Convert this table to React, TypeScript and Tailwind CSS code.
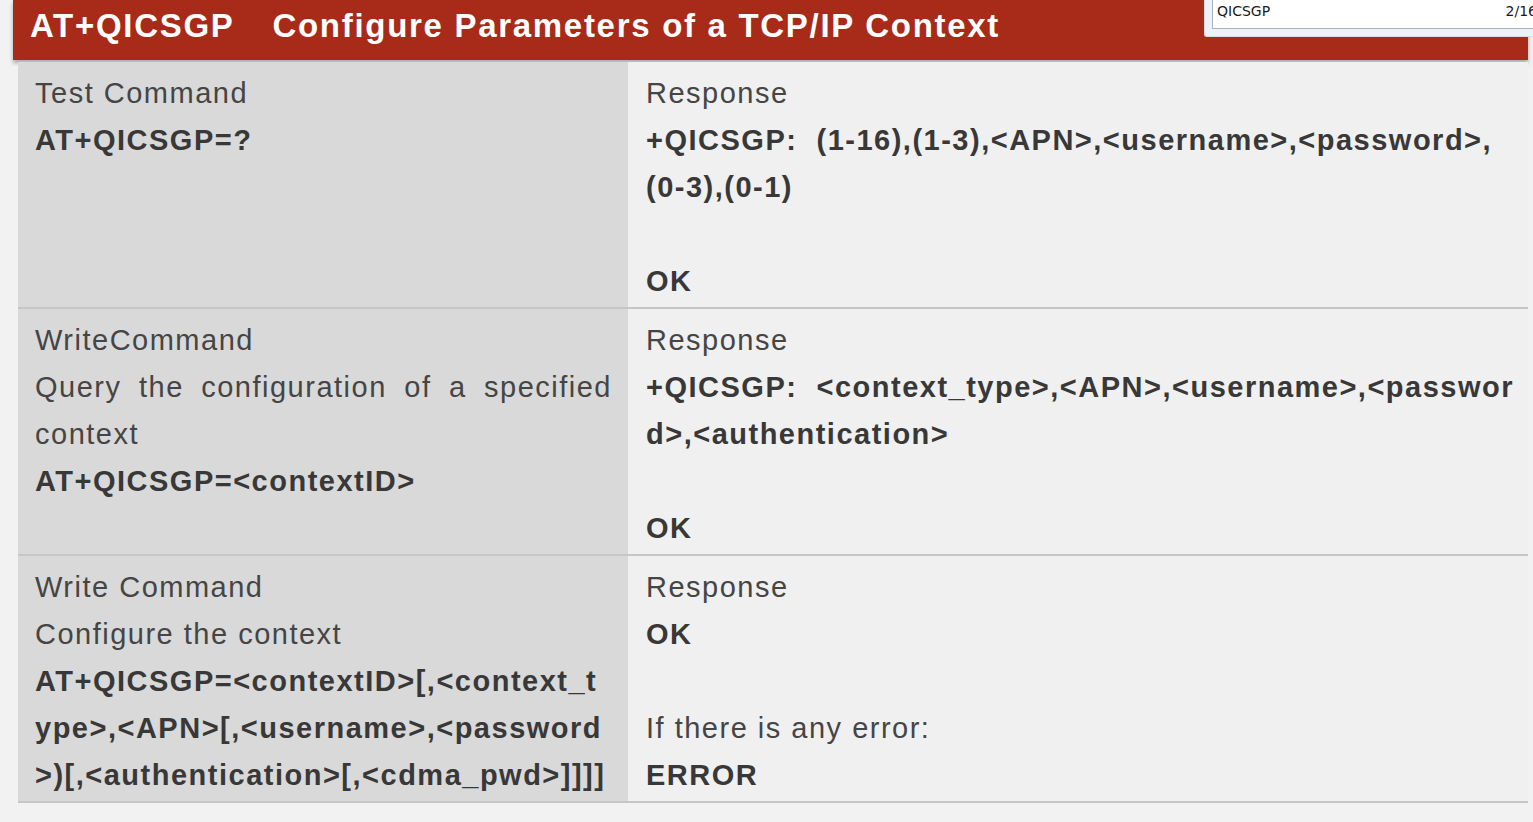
import React from 'react'

type Line = { text: string; bold?: boolean; justify?: boolean }

interface Row {
  left: Line[]
  right: Line[]
}

const rows: Row[] = [
  {
    left: [{ text: 'Test Command' }, { text: 'AT+QICSGP=?', bold: true }],
    right: [
      { text: 'Response' },
      { text: '+QICSGP:  (1-16),(1-3),<APN>,<username>,<password>,', bold: true },
      { text: '(0-3),(0-1)', bold: true },
      { text: '' },
      { text: 'OK', bold: true },
    ],
  },
  {
    left: [
      { text: 'WriteCommand' },
      { text: 'Query the configuration of a specified', justify: true },
      { text: 'context' },
      { text: 'AT+QICSGP=<contextID>', bold: true },
    ],
    right: [
      { text: 'Response' },
      { text: '+QICSGP:  <context_type>,<APN>,<username>,<passwor', bold: true },
      { text: 'd>,<authentication>', bold: true },
      { text: '' },
      { text: 'OK', bold: true },
    ],
  },
  {
    left: [
      { text: 'Write Command' },
      { text: 'Configure the context' },
      { text: 'AT+QICSGP=<contextID>[,<context_t', bold: true },
      { text: 'ype>,<APN>[,<username>,<password', bold: true },
      { text: '>)[,<authentication>[,<cdma_pwd>]]]]', bold: true },
    ],
    right: [
      { text: 'Response' },
      { text: 'OK', bold: true },
      { text: '' },
      { text: 'If there is any error:' },
      { text: 'ERROR', bold: true },
    ],
  },
]

function TextLine({ line }: { line: Line }) {
  return (
    <div
      className={`h-[47px] whitespace-pre leading-[47px] tracking-[1.5px] ${
        line.bold ? 'font-bold text-[#383838]' : 'text-[#454545]'
      } ${line.justify ? 'text-justify [text-align-last:justify] whitespace-normal' : ''}`}
    >
      {line.text}
    </div>
  )
}

function SearchBox() {
  return (
    <div className="absolute right-0 top-0 h-[37px] w-[329px] rounded-bl-[3px] border-b border-l border-[#d6dde6] bg-[#eef2f6] pb-[7px] pl-[7px]">
      <div className="flex h-[29px] items-start justify-between overflow-hidden border-b border-l border-[#a9b3bd] bg-white pl-[4px] font-['DejaVu_Sans',sans-serif] text-[14px] leading-[22px] text-[#1a1a1a]">
        <span>QICSGP</span>
        <span className="-mr-[4px] whitespace-nowrap">2/16</span>
      </div>
    </div>
  )
}

export default function App() {
  return (
    <div className="relative h-[822px] w-[1533px] overflow-hidden bg-[#f2f2f2] font-['Liberation_Sans',Arial,sans-serif] text-[29px]">
      <div className="ml-[13px] flex h-[60px] w-[1515px] gap-[38px] bg-[#a82a18] pl-[17px] pt-[4px] text-[33px] font-bold leading-[44px] tracking-[1.7px] text-white shadow-[0_3px_4px_rgba(0,0,0,0.3)]">
        <span>AT+QICSGP</span>
        <span>Configure Parameters of a TCP/IP Context</span>
      </div>
      <SearchBox />
      <div className="ml-[18px] mt-[2px] w-[1510px]">
        {rows.map((row, i) => (
          <div key={i} className="grid grid-cols-[610px_1fr] border-b-[2px] border-[#c6c6c6]">
            <div className="bg-[#d9d9d9] pb-[2px] pl-[17px] pr-[16px] pt-[8px]">
              {row.left.map((l, j) => (
                <TextLine key={j} line={l} />
              ))}
            </div>
            <div className="bg-[#f0f0f0] pb-[2px] pl-[18px] pt-[8px]">
              {row.right.map((l, j) => (
                <TextLine key={j} line={l} />
              ))}
            </div>
          </div>
        ))}
      </div>
    </div>
  )
}
